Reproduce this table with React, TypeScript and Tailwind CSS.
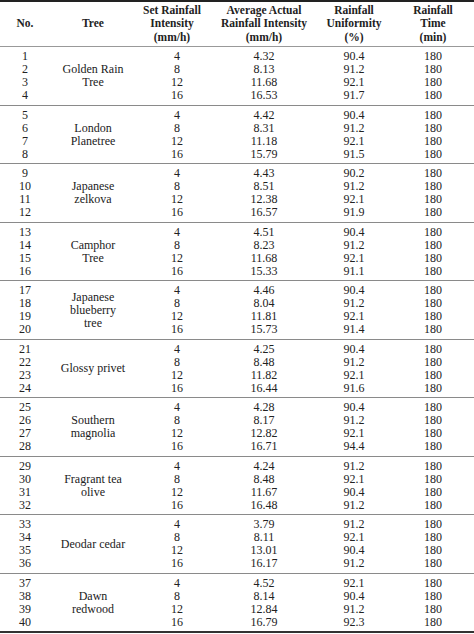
import React from 'react';

type Group = {
  tree: string[];
  avg: string[];
  uni: string[];
};

const groups: Group[] = [
  { tree: ['Golden Rain', 'Tree'], avg: ['4.32', '8.13', '11.68', '16.53'], uni: ['90.4', '91.2', '92.1', '91.7'] },
  { tree: ['London', 'Planetree'], avg: ['4.42', '8.31', '11.18', '15.79'], uni: ['90.4', '91.2', '92.1', '91.5'] },
  { tree: ['Japanese', 'zelkova'], avg: ['4.43', '8.51', '12.38', '16.57'], uni: ['90.2', '91.2', '92.1', '91.9'] },
  { tree: ['Camphor', 'Tree'], avg: ['4.51', '8.23', '11.68', '15.33'], uni: ['90.4', '91.2', '92.1', '91.1'] },
  { tree: ['Japanese', 'blueberry', 'tree'], avg: ['4.46', '8.04', '11.81', '15.73'], uni: ['90.4', '91.2', '92.1', '91.4'] },
  { tree: ['Glossy privet'], avg: ['4.25', '8.48', '11.82', '16.44'], uni: ['90.4', '91.2', '92.1', '91.6'] },
  { tree: ['Southern', 'magnolia'], avg: ['4.28', '8.17', '12.82', '16.71'], uni: ['90.4', '91.2', '92.1', '94.4'] },
  { tree: ['Fragrant tea', 'olive'], avg: ['4.24', '8.48', '11.67', '16.48'], uni: ['91.2', '92.1', '90.4', '91.2'] },
  { tree: ['Deodar cedar'], avg: ['3.79', '8.11', '13.01', '16.17'], uni: ['91.2', '92.1', '90.4', '91.2'] },
  { tree: ['Dawn', 'redwood'], avg: ['4.52', '8.14', '12.84', '16.79'], uni: ['92.1', '90.4', '91.2', '92.3'] },
];

const setIntensity = ['4', '8', '12', '16'];
const cols = 'grid grid-cols-[50px_82px_80px_104px_76px_82px]';

function Column({ values, className = '' }: { values: string[]; className?: string }) {
  return (
    <div className={`flex flex-col ${className}`}>
      {values.map((v, i) => (
        <div key={i} className="h-[13px] leading-[13px] text-center">
          {v}
        </div>
      ))}
    </div>
  );
}

export default function App() {
  return (
    <div
      className="w-[474px] h-[634px] bg-white text-[#222] overflow-hidden"
      style={{ fontFamily: '"Liberation Serif", "DejaVu Serif", serif' }}
    >
      <div className="border-t-[2.5px] border-[#222]">
        {/* Header */}
        <div className={`${cols} h-[45px] items-center border-b-[1.5px] border-[#999] text-[11.5px] font-bold leading-[13.5px] text-center`}>
          <div>No.</div>
          <div className="pl-[4px]">Tree</div>
          <div>
            Set Rainfall
            <br />
            Intensity
            <br />
            (mm/h)
          </div>
          <div>
            Average Actual
            <br />
            Rainfall Intensity
            <br />
            (mm/h)
          </div>
          <div>
            Rainfall
            <br />
            Uniformity
            <br />
            (%)
          </div>
          <div>
            Rainfall
            <br />
            Time
            <br />
            (min)
          </div>
        </div>

        {/* Body */}
        {groups.map((g, gi) => {
          const start = gi * 4 + 1;
          const nos = [0, 1, 2, 3].map((k) => String(start + k));
          const last = gi === groups.length - 1;
          return (
            <div
              key={gi}
              className={`${cols} pt-[3px] pb-[2.5px] text-[12px] ${
                last ? 'border-b-[2.5px] border-[#333]' : 'border-b border-[#8a8a8a]'
              }`}
            >
              <Column values={nos} />
              <div className="flex flex-col items-center justify-center pl-[4px] leading-[13px] text-center">
                {g.tree.map((t, i) => (
                  <div key={i}>{t}</div>
                ))}
              </div>
              <Column values={setIntensity} className="pl-[10px]" />
              <Column values={g.avg} />
              <Column values={g.uni} />
              <Column values={['180', '180', '180', '180']} />
            </div>
          );
        })}
      </div>
    </div>
  );
}
